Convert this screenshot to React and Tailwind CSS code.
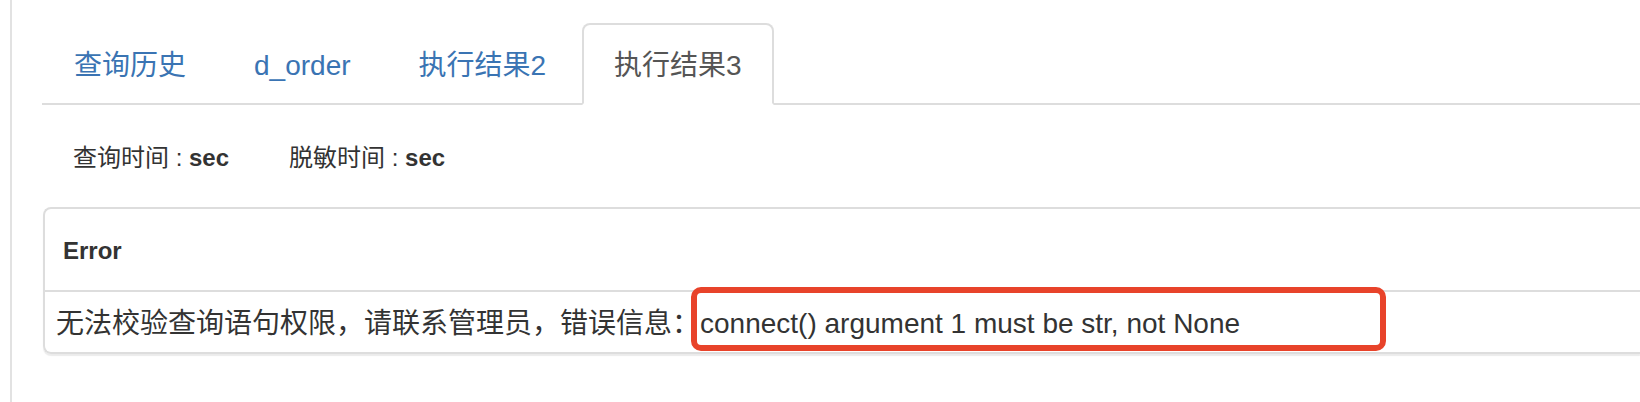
import { useState } from "react";

const tabs = ["查询历史", "d_order", "执行结果2", "执行结果3"];

const font = "font-['Liberation_Sans','Noto_Sans_CJK_SC',sans-serif]";

const App = () => {
    const [active, setActive] = useState(3);

    return (
        <div className={`min-h-[402px] bg-white text-[#333] ${font}`}>
            <div className="ml-[10px] min-h-[402px] border-l-2 border-[#e2e2e2] pl-[30px] pt-[23px]">

                {/* tabs */}
                <ul className="flex border-b-2 border-[#ddd]">
                    {tabs.map((t, i) => (
                        <li key={t} className="-mb-[2px] mr-[4px]">
                            <button
                                onClick={() => setActive(i)}
                                className={
                                    i === active
                                        ? "h-[82px] px-[30px] pt-[4px] text-[28px] leading-none text-[#555] bg-white border-2 border-[#ddd] border-b-transparent rounded-t-[8px]"
                                        : "h-[82px] px-[30px] pt-[4px] text-[28px] leading-none text-[#3a74b3] border-2 border-transparent"
                                }
                            >
                                {t}
                            </button>
                        </li>
                    ))}
                </ul>

                {/* timing */}
                <div className="flex h-[102px] items-center gap-[60px] pl-[31px] pt-[4px] text-[24px]">
                    <span>查询时间 : <b>sec</b></span>
                    <span>脱敏时间 : <b>sec</b></span>
                </div>

                {/* error panel */}
                <div className="ml-[1px] rounded-tl-[8px] rounded-bl-[8px] border-2 border-r-0 border-[#ddd] shadow-[0_2px_1px_rgba(0,0,0,0.08)]">
                    <div className="flex h-[81px] items-center pl-[18px] pt-[2px] text-[24px] font-bold">
                        Error
                    </div>
                    <div className="flex h-[62px] items-center border-t-2 border-[#ddd] pl-[11px] pt-[3px] text-[28px]">
                        无法校验查询语句权限，请联系管理员，错误信息：
                        <span className="relative">
                            connect() argument 1 must be str, not None
                            {/* highlight box */}
                            <span className="absolute -left-[9px] -top-[16px] h-[64px] w-[695px] rounded-[10px] border-[6px] border-[#e8432a]" />
                        </span>
                    </div>
                </div>
            </div>
        </div>
    );
};

export default App;
